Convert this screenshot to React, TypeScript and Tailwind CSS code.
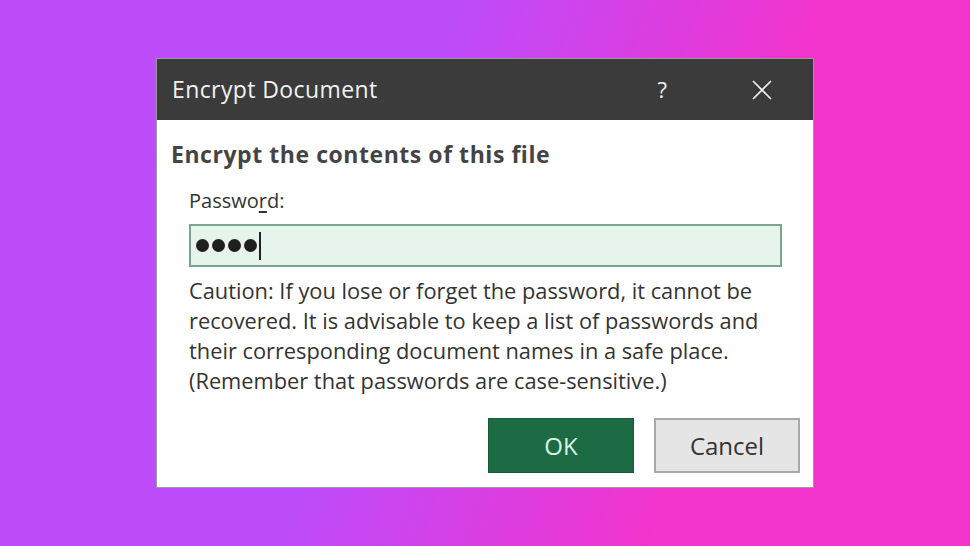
import React from "react";

const font = { fontFamily: '"Open Sans", "Noto Sans", sans-serif' };

export default function App() {
  return (
    <div
      className="flex h-[546px] w-full items-center justify-center bg-[linear-gradient(108deg,#bd4cfb_40%,#f233cc_72%)]"
      style={font}
    >
      <div className="flex h-[430px] w-[658px] flex-col border border-[#9a9a9a] bg-white">
        {/* title bar */}
        <div className="flex h-[61px] shrink-0 items-center bg-[#3b3b3b] pl-[15px] pr-[40px] text-[#f2f2f2]">
          <span className="text-[23px] tracking-[0.4px]">Encrypt Document</span>
          <span className="ml-auto text-[22px]">?</span>
          <svg className="ml-[84px]" width="22" height="22" viewBox="0 0 22 22" fill="none" stroke="#f2f2f2" strokeWidth="1.6">
            <path d="M2 2 L20 20 M20 2 L2 20" />
          </svg>
        </div>

        {/* body */}
        <div className="flex flex-1 flex-col pl-[14px] pr-[13px] pt-[19px]">
          <h1 className="text-[23px] font-bold leading-[30px] tracking-[0.55px] text-[#444]">
            Encrypt the contents of this file
          </h1>
          <div className="mt-[19px] pl-[18px] pr-[18px]">
            <label className="block text-[20px] leading-[26px] text-[#333]">
              Passwo<span className="underline underline-offset-[3px]">r</span>d:
            </label>
            <div className="mt-[10px] flex h-[43px] items-center border-2 border-[#78a58b] bg-[#e6f4ec] pl-[5px]">
              <span className="flex gap-[3px]">
                {[0, 1, 2, 3].map((i) => (
                  <span key={i} className="h-[13px] w-[13px] rounded-full bg-[#1f1f1f]" />
                ))}
              </span>
              <span className="ml-[2px] h-[28px] w-[2px] bg-[#222]" />
            </div>
            <p className="mt-[9px] text-[21.8px] leading-[30px] text-[#333]">
              Caution: If you lose or forget the password, it cannot be
              <br />
              recovered. It is advisable to keep a list of passwords and
              <br />
              their corresponding document names in a safe place.
              <br />
              (Remember that passwords are case-sensitive.)
            </p>
          </div>
          <div className="mt-auto mb-[14px] flex justify-end gap-[20px]">
            <button className="h-[55px] w-[146px] border border-[#175a39] bg-[#1d6b45] text-[24px] text-[#d8f3e3]">
              OK
            </button>
            <button className="h-[55px] w-[146px] border-2 border-[#a9a9a9] bg-[#e5e5e5] text-[24px] text-[#333]">
              Cancel
            </button>
          </div>
        </div>
      </div>
    </div>
  );
}
